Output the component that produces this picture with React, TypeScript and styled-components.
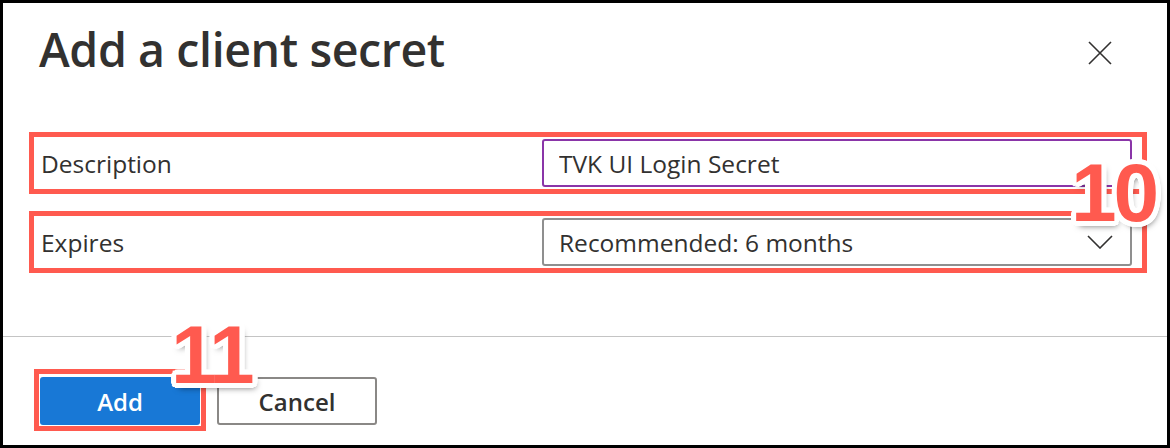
import React, { useState } from 'react';
import styled, { createGlobalStyle } from 'styled-components';

const GlobalStyle = createGlobalStyle`
    html, body {
        margin: 0;
        padding: 0;
        background: #fff;
    }
    body {
        font-family: 'Open Sans', 'Noto Sans', sans-serif;
        color: #323130;
    }
`;

// white ring + soft drop shadow for the numbered callouts
const ring = (() => {
    const parts: string[] = [];
    for (let i = 0; i < 24; i++) {
        const a = (i / 24) * Math.PI * 2;
        parts.push(`${(Math.cos(a) * 5).toFixed(2)}px ${(Math.sin(a) * 5).toFixed(2)}px 0 #fff`);
    }
    parts.push('3px 5px 6px rgba(0, 0, 0, 0.55)');
    return parts.join(', ');
})();

const Frame = styled.div`
    position: relative;
    width: 1170px;
    height: 448px;
    box-sizing: border-box;
    border: 3px solid #000;
    background: #fff;
    overflow: hidden;
`;

const Header = styled.div`
    display: flex;
    justify-content: space-between;
    align-items: flex-start;
    padding: 16px 55px 0 36px;
    height: 112px;
    box-sizing: border-box;
`;

const Title = styled.h1`
    margin: 0;
    font-size: 46.5px;
    line-height: 60px;
    font-weight: 600;
    letter-spacing: -0.4px;
    color: #323130;
`;

const CloseButton = styled.button`
    display: flex;
    align-items: center;
    justify-content: center;
    width: 24px;
    height: 24px;
    margin-top: 22px;
    padding: 0;
    border: none;
    background: transparent;
    cursor: pointer;
`;

const Fields = styled.div`
    display: flex;
    flex-direction: column;
    gap: 17px;
    padding: 17px 20px 0 26px;
`;

const FieldRow = styled.div`
    display: flex;
    align-items: center;
    justify-content: space-between;
    height: 62px;
    box-sizing: border-box;
    border: 5px solid #ff5a4f;
    padding: 0 10px 0 7px;
`;

const Label = styled.label`
    font-size: 24.5px;
    color: #323130;
`;

const TextInput = styled.input`
    width: 590px;
    height: 48px;
    box-sizing: border-box;
    border: 2px solid #8a35a8;
    border-radius: 3px;
    padding: 0 15px;
    font-family: inherit;
    font-size: 24.5px;
    color: #323130;
    background: #fff;

    &:focus {
        outline: none;
    }
`;

const Select = styled.div`
    display: flex;
    align-items: center;
    justify-content: space-between;
    width: 590px;
    height: 48px;
    box-sizing: border-box;
    border: 2px solid #8f8f8f;
    border-radius: 3px;
    padding: 0 17px 0 15px;
    font-size: 24.5px;
    color: #323130;
    cursor: pointer;
`;

const Divider = styled.hr`
    margin: 63px 0 0;
    border: none;
    border-top: 1px solid #c4c4c4;
`;

const Footer = styled.div`
    display: flex;
    align-items: flex-start;
    gap: 11px;
    padding: 32px 0 0 31px;
`;

const Highlight = styled.div`
    display: flex;
    border: 5px solid #ff5a4f;
    padding: 3px 1px 1px 1px;
`;

const Button = styled.button<{ $primary?: boolean }>`
    width: 160px;
    height: 48px;
    margin-top: ${({ $primary }) => ($primary ? '0' : '8px')};
    box-sizing: border-box;
    border-radius: 3px;
    border: ${({ $primary }) => ($primary ? 'none' : '2px solid #8a8886')};
    background: ${({ $primary }) => ($primary ? '#1878d6' : '#fff')};
    color: ${({ $primary }) => ($primary ? '#fff' : '#323130')};
    font-family: inherit;
    font-size: 24px;
    font-weight: 600;
    cursor: pointer;
`;

const Callout = styled.span<{ $left: number; $top: number }>`
    position: absolute;
    left: ${({ $left }) => $left}px;
    top: ${({ $top }) => $top}px;
    font-family: 'Liberation Sans', Arial, sans-serif;
    font-weight: 700;
    font-size: 82px;
    line-height: 82px;
    letter-spacing: -3px;
    color: #ff5a4f;
    text-shadow: ${ring};
    pointer-events: none;
`;

const CloseIcon = () => (
    <svg width="24" height="24" viewBox="0 0 24 24">
        <path d="M1 1 L23 23 M23 1 L1 23" stroke="#323130" strokeWidth="1.6" fill="none" />
    </svg>
);

const ChevronIcon = () => (
    <svg width="26" height="14" viewBox="0 0 26 14">
        <path d="M1 1 L13 13 L25 1" stroke="#323130" strokeWidth="1.6" fill="none" />
    </svg>
);

const App = () => {
    const [description, setDescription] = useState<string>('TVK UI Login Secret');

    return (
        <>
            <GlobalStyle />
            <Frame>
                <Header>
                    <Title>Add a client secret</Title>
                    <CloseButton aria-label='Close'>
                        <CloseIcon />
                    </CloseButton>
                </Header>
                <Fields>
                    <FieldRow>
                        <Label>Description</Label>
                        <TextInput type='text' value={description} onChange={(e) => setDescription(e.target.value)} />
                    </FieldRow>
                    <FieldRow>
                        <Label>Expires</Label>
                        <Select>
                            <span>Recommended: 6 months</span>
                            <ChevronIcon />
                        </Select>
                    </FieldRow>
                </Fields>
                <Divider />
                <Footer>
                    <Highlight>
                        <Button $primary>Add</Button>
                    </Highlight>
                    <Button>Cancel</Button>
                </Footer>
                <Callout $left={1068} $top={149}>10</Callout>
                <Callout $left={168} $top={311}>11</Callout>
            </Frame>
        </>
    );
};

export default App;
